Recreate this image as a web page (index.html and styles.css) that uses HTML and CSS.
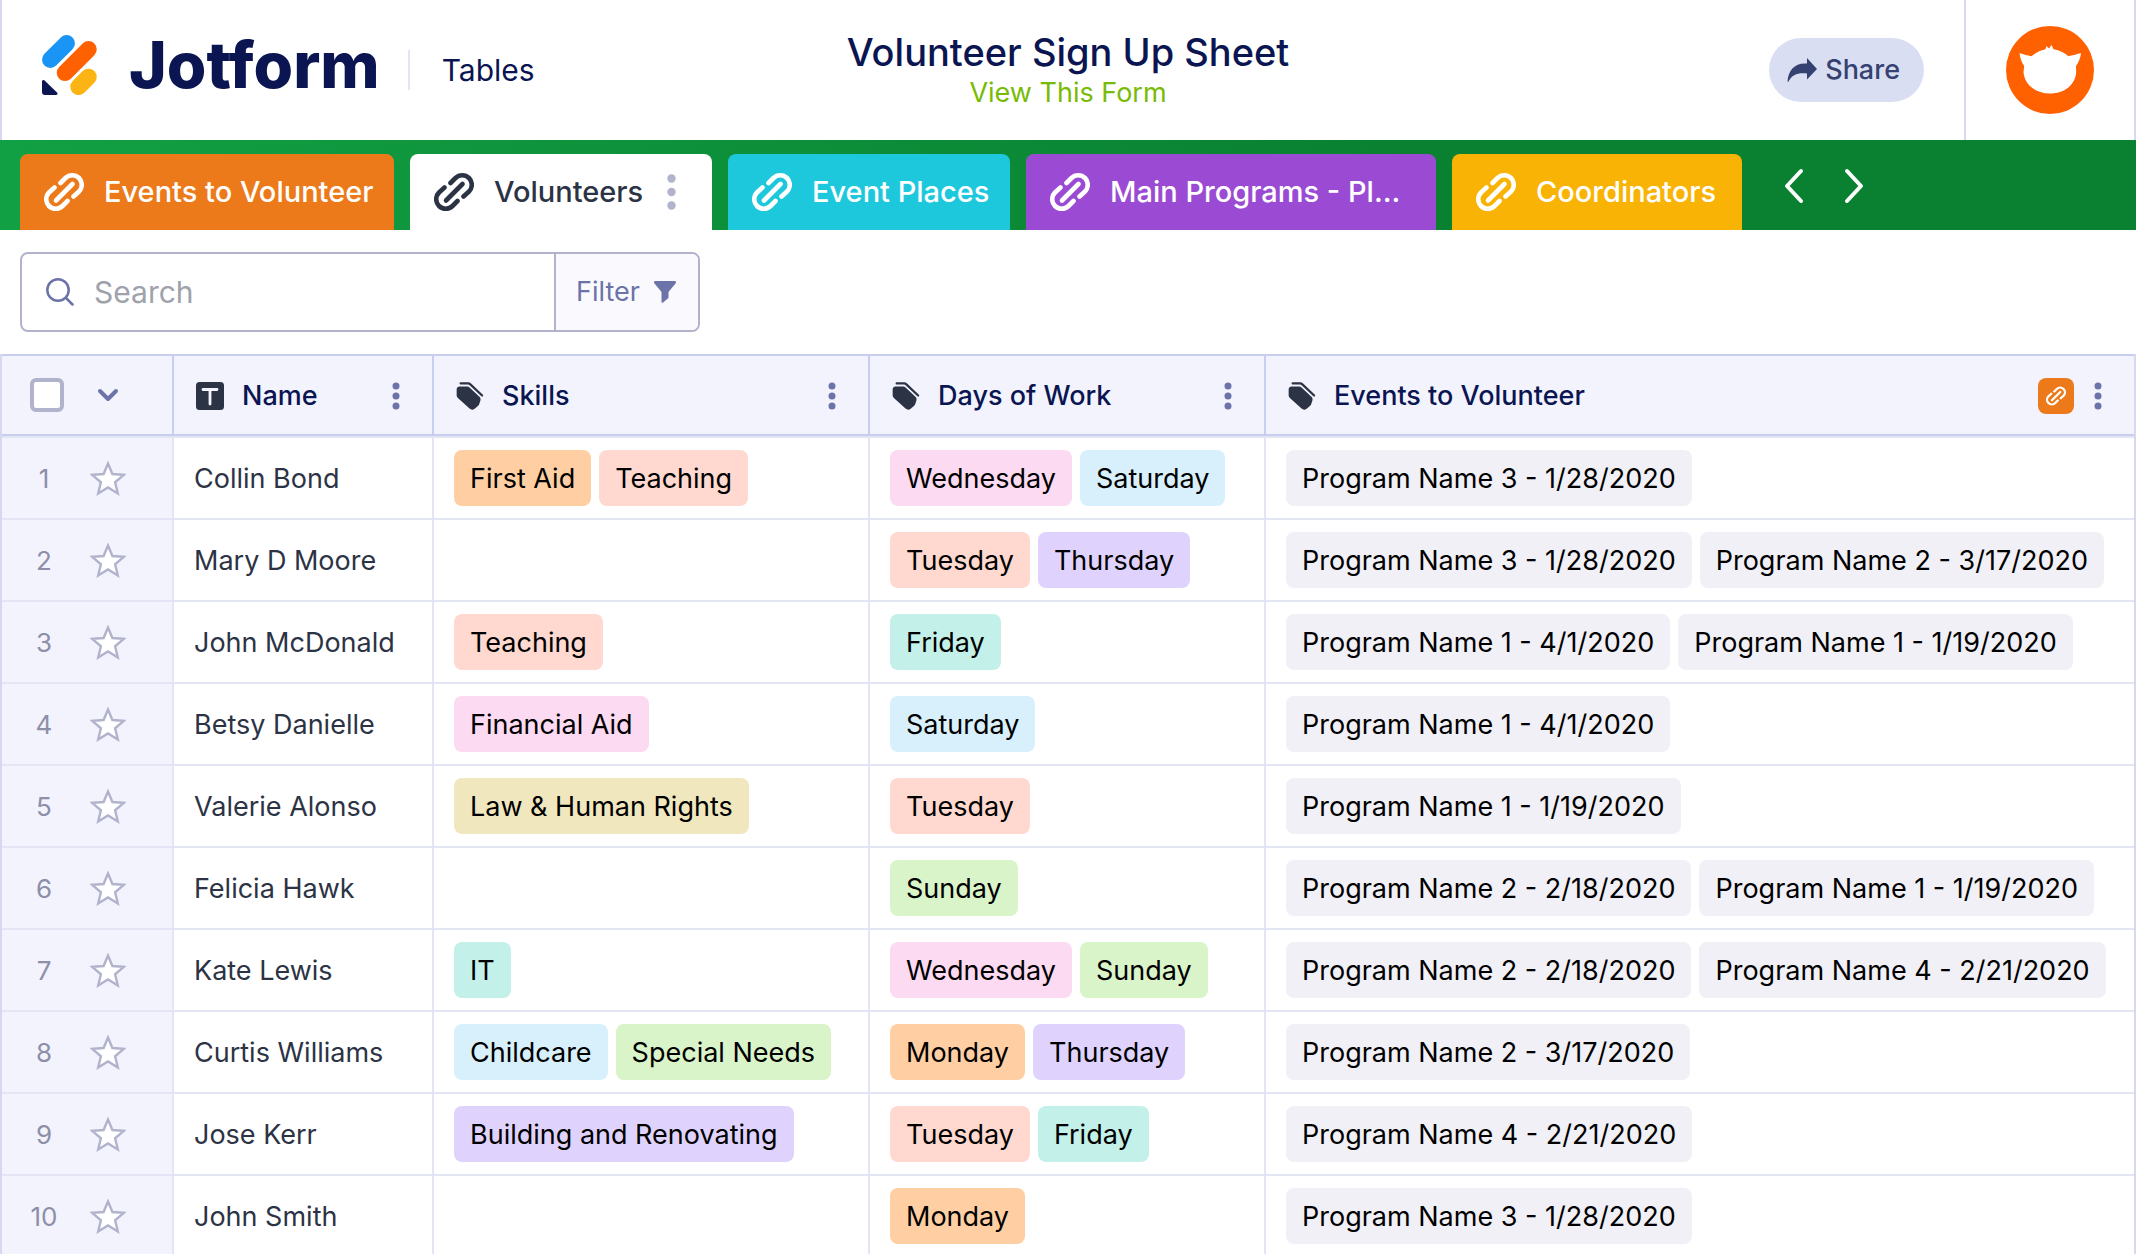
FILE: index.html
```html
<!DOCTYPE html>
<html lang="en">
<head>
<meta charset="utf-8">
<meta name="viewport" content="width=device-width, initial-scale=1">
<title>Volunteer Sign Up Sheet</title>
<link rel="stylesheet" href="styles.css">
</head>
<body>
<svg class="sprite" aria-hidden="true">
  <symbol id="i-link" viewBox="0 0 40 40"><g fill="none" stroke="currentColor" stroke-width="4.6" stroke-linecap="round" stroke-linejoin="round"><path d="M16.500 11L21.500 6A9.500 9.500 0 0 1 35 19.500L29.500 24.500"/><path d="M23.500 29L18.500 34A9.500 9.500 0 0 1 5 20.500L10.500 15.500"/><path d="M12 28.500L28.500 12"/></g></symbol>
  <symbol id="i-dots" viewBox="0 0 8 28"><circle cx="4" cy="4" r="3.500" fill="currentColor"/><circle cx="4" cy="14" r="3.500" fill="currentColor"/><circle cx="4" cy="24" r="3.500" fill="currentColor"/></symbol>
  <symbol id="i-tag" viewBox="0 0 29 30"><path d="M0.200 8C0.200 6 1.500 4.700 3.500 4.700H11C12.300 4.700 13.200 5 14 5.800L24.600 15.800C25.800 17 26.100 18.300 25.600 20L24.500 23.200C24.200 24.300 23.800 25 23 25.700L19.500 28.700C17.800 30 15.500 29.900 14 28.500L1.800 17.500C0.700 16.500 0.200 15.500 0.200 14Z" fill="currentColor"/><path d="M4.500 1.500H12.500C13.500 1.500 14.200 1.800 14.900 2.500L27.500 14.500" fill="none" stroke="currentColor" stroke-width="2.400" stroke-linecap="round"/></symbol>
  <symbol id="i-star" viewBox="0 0 36 36"><path d="M18 2.500L22.400 13L33.800 13.900L25.100 21.300L27.800 32.500L18 26.500L8.200 32.500L10.900 21.300L2.200 13.900L13.600 13Z" fill="#fff" stroke="currentColor" stroke-width="2.400"/></symbol>
</svg>

<header class="topbar">
  <div class="brand">
    <a class="brand-link" href="#">
      <svg class="brand-mark" viewBox="42 34 55 60" aria-hidden="true"><g fill="none" stroke-width="16.500" stroke-linecap="round"><path d="M50.300 58.700L66.700 42.300" stroke="#1a94f5"/><path d="M65 71.800L88.500 48.300" stroke="#ff6100"/><path d="M78.500 85.800L88.500 75.900" stroke="#fbb413"/></g><path d="M42 80.500C42 79 43.500 78.500 44.600 79.500L57 91.500C58 92.600 57.500 94 56 94H45C43 94 42 93 42 91Z" fill="#0a1551"/></svg>
      <span class="wordmark">Jotform</span>
    </a>
    <a class="product" href="#">Tables</a>
  </div>
  <div class="heading">
    <h1>Volunteer Sign Up Sheet</h1>
    <a class="view-form" href="#">View This Form</a>
  </div>
  <div class="account">
    <button class="share" type="button">
      <svg class="share-icon" viewBox="0 0 30 24" aria-hidden="true"><path d="M0.500 24C1 12 8 4.500 20 5.500V0L30 11L20 21.500V15.500C11 14.500 5 16.500 1.500 23.500Z" fill="#354170"/></svg>
      Share
    </button>
    <div class="profile">
      <button class="avatar" type="button" aria-label="Account">
        <svg viewBox="0 0 88 88" aria-hidden="true"><circle cx="44" cy="44" r="44" fill="#ff6100"/><path d="M13.500 27C18 28.500 21 29.500 25.500 30.200C30 26.500 34.500 24.200 39.500 23.200L40.500 20L43 22.500L45.500 19L47.500 23.200C54 24.200 59 27 62.500 30.200C66 29.500 70 28.500 75 27C74.500 32 72.500 36.500 70 40L70.200 46C69.500 59 58 67.500 44 67.500C30 67.500 18.500 59 17.500 46L18.200 40C15.500 36 14 32 13.500 27Z" fill="#fff"/></svg>
      </button>
    </div>
  </div>
</header>

<nav class="tabs">
  <button class="tab tab-orange" type="button"><svg class="link-icon" aria-hidden="true"><use href="#i-link"/></svg><span>Events to Volunteer</span></button>
  <button class="tab tab-active" type="button"><svg class="link-icon" aria-hidden="true"><use href="#i-link"/></svg><span>Volunteers</span><svg class="tab-dots" viewBox="0 0 9 36" aria-hidden="true"><circle cx="4.500" cy="4.500" r="4.200"/><circle cx="4.500" cy="18" r="4.200"/><circle cx="4.500" cy="31.500" r="4.200"/></svg></button>
  <button class="tab tab-cyan" type="button"><svg class="link-icon" aria-hidden="true"><use href="#i-link"/></svg><span>Event Places</span></button>
  <button class="tab tab-purple" type="button"><svg class="link-icon" aria-hidden="true"><use href="#i-link"/></svg><span>Main Programs - Pl...</span></button>
  <button class="tab tab-yellow" type="button"><svg class="link-icon" aria-hidden="true"><use href="#i-link"/></svg><span>Coordinators</span></button>
  <div class="pager">
    <button type="button" aria-label="Previous tabs"><svg viewBox="0 0 20 36" aria-hidden="true"><path d="M17 3L3 18L17 33"/></svg></button>
    <button type="button" aria-label="Next tabs"><svg viewBox="0 0 20 36" aria-hidden="true"><path d="M3 3L17 18L3 33"/></svg></button>
  </div>
</nav>

<form class="toolbar">
  <label class="search">
    <svg viewBox="0 0 28 28" aria-hidden="true"><circle cx="12" cy="12" r="10.700"/><path d="M20 20L26.500 26.500"/></svg>
    <input type="text" placeholder="Search" aria-label="Search">
  </label>
  <button class="filter" type="button">Filter
    <svg viewBox="0 0 22 22" aria-hidden="true"><path d="M1.500 0H20.500C22 0 22.500 1.500 21.500 2.600L14.500 11V17L9 21.500C8.300 22 7.500 21.700 7.500 20.800V11L0.500 2.600C-0.500 1.500 0 0 1.500 0Z" fill="currentColor"/></svg>
  </button>
</form>

<main class="sheet">
<table>
  <colgroup><col class="c-index"><col class="c-name"><col class="c-skills"><col class="c-days"><col></colgroup>
  <thead>
    <tr>
      <th><div class="index-head"><input type="checkbox" aria-label="Select all rows"><svg viewBox="0 0 22 14" aria-hidden="true"><path d="M3 3L11 11L19 3"/></svg></div></th>
      <th><div class="head"><svg class="type" viewBox="0 0 28 28" aria-hidden="true"><rect width="28" height="28" rx="3.500" fill="currentColor"/><path d="M7 7.500H21M14 7.500V22" stroke="#f3f3fe" stroke-width="2.800" stroke-linecap="round"/></svg><span>Name</span><svg class="dots" aria-hidden="true"><use href="#i-dots"/></svg></div></th>
      <th><div class="head"><svg class="type" aria-hidden="true"><use href="#i-tag"/></svg><span>Skills</span><svg class="dots" aria-hidden="true"><use href="#i-dots"/></svg></div></th>
      <th><div class="head"><svg class="type" aria-hidden="true"><use href="#i-tag"/></svg><span>Days of Work</span><svg class="dots" aria-hidden="true"><use href="#i-dots"/></svg></div></th>
      <th><div class="head"><svg class="type" aria-hidden="true"><use href="#i-tag"/></svg><span>Events to Volunteer</span><i class="linked"><svg aria-hidden="true"><use href="#i-link"/></svg></i><svg class="dots" aria-hidden="true"><use href="#i-dots"/></svg></div></th>
    </tr>
  </thead>
  <tbody>
    <tr><td><div class="index"><span>1</span><svg aria-hidden="true"><use href="#i-star"/></svg></div></td><td>Collin Bond</td><td><div class="chips"><span class="chip orange">First Aid</span><span class="chip coral">Teaching</span></div></td><td><div class="chips"><span class="chip pink">Wednesday</span><span class="chip sky">Saturday</span></div></td><td><div class="chips"><span class="chip">Program Name 3 - 1/28/2020</span></div></td></tr>
    <tr><td><div class="index"><span>2</span><svg aria-hidden="true"><use href="#i-star"/></svg></div></td><td>Mary D Moore</td><td></td><td><div class="chips"><span class="chip coral">Tuesday</span><span class="chip violet">Thursday</span></div></td><td><div class="chips"><span class="chip">Program Name 3 - 1/28/2020</span><span class="chip">Program Name 2 - 3/17/2020</span></div></td></tr>
    <tr><td><div class="index"><span>3</span><svg aria-hidden="true"><use href="#i-star"/></svg></div></td><td>John McDonald</td><td><div class="chips"><span class="chip coral">Teaching</span></div></td><td><div class="chips"><span class="chip teal">Friday</span></div></td><td><div class="chips"><span class="chip">Program Name 1 - 4/1/2020</span><span class="chip">Program Name 1 - 1/19/2020</span></div></td></tr>
    <tr><td><div class="index"><span>4</span><svg aria-hidden="true"><use href="#i-star"/></svg></div></td><td>Betsy Danielle</td><td><div class="chips"><span class="chip pink">Financial Aid</span></div></td><td><div class="chips"><span class="chip sky">Saturday</span></div></td><td><div class="chips"><span class="chip">Program Name 1 - 4/1/2020</span></div></td></tr>
    <tr><td><div class="index"><span>5</span><svg aria-hidden="true"><use href="#i-star"/></svg></div></td><td>Valerie Alonso</td><td><div class="chips"><span class="chip sand">Law &amp; Human Rights</span></div></td><td><div class="chips"><span class="chip coral">Tuesday</span></div></td><td><div class="chips"><span class="chip">Program Name 1 - 1/19/2020</span></div></td></tr>
    <tr><td><div class="index"><span>6</span><svg aria-hidden="true"><use href="#i-star"/></svg></div></td><td>Felicia Hawk</td><td></td><td><div class="chips"><span class="chip green">Sunday</span></div></td><td><div class="chips"><span class="chip">Program Name 2 - 2/18/2020</span><span class="chip">Program Name 1 - 1/19/2020</span></div></td></tr>
    <tr><td><div class="index"><span>7</span><svg aria-hidden="true"><use href="#i-star"/></svg></div></td><td>Kate Lewis</td><td><div class="chips"><span class="chip teal">IT</span></div></td><td><div class="chips"><span class="chip pink">Wednesday</span><span class="chip green">Sunday</span></div></td><td><div class="chips"><span class="chip">Program Name 2 - 2/18/2020</span><span class="chip">Program Name 4 - 2/21/2020</span></div></td></tr>
    <tr><td><div class="index"><span>8</span><svg aria-hidden="true"><use href="#i-star"/></svg></div></td><td>Curtis Williams</td><td><div class="chips"><span class="chip sky">Childcare</span><span class="chip green">Special Needs</span></div></td><td><div class="chips"><span class="chip orange">Monday</span><span class="chip violet">Thursday</span></div></td><td><div class="chips"><span class="chip">Program Name 2 - 3/17/2020</span></div></td></tr>
    <tr><td><div class="index"><span>9</span><svg aria-hidden="true"><use href="#i-star"/></svg></div></td><td>Jose Kerr</td><td><div class="chips"><span class="chip violet">Building and Renovating</span></div></td><td><div class="chips"><span class="chip coral">Tuesday</span><span class="chip teal">Friday</span></div></td><td><div class="chips"><span class="chip">Program Name 4 - 2/21/2020</span></div></td></tr>
    <tr><td><div class="index"><span>10</span><svg aria-hidden="true"><use href="#i-star"/></svg></div></td><td>John Smith</td><td></td><td><div class="chips"><span class="chip orange">Monday</span></div></td><td><div class="chips"><span class="chip">Program Name 3 - 1/28/2020</span></div></td></tr>
  </tbody>
</table>
</main>
</body>
</html>
```
FILE: styles.css
```css
* { box-sizing: border-box; }
body {
  margin: 0;
  height: 100vh;
  display: flex;
  flex-direction: column;
  overflow: hidden;
  background: #fff;
  color: #2c3345;
  font: 400 27px/36px Inter, "Liberation Sans", sans-serif;
}
button, input { font: inherit; color: inherit; margin: 0; }
button { border: 0; padding: 0; background: none; cursor: pointer; }
a { text-decoration: none; }
svg { display: block; flex: none; }
.sprite { position: absolute; width: 0; height: 0; }

/* Top bar */
.topbar {
  display: grid;
  grid-template-columns: 1fr auto 1fr;
  flex: none;
  height: 140px;
  border: solid #d6d8ef;
  border-width: 0 2px;
}
.brand { display: flex; align-items: center; padding-left: 40px; }
.brand-link { display: flex; align-items: center; gap: 32px; padding: 0 28px 10px 0; }
.brand-mark { width: 55px; height: 60px; }
.wordmark { color: #0a1551; font-weight: 800; font-size: 64px; line-height: 64px; }
.product {
  height: 40px;
  padding-left: 32px;
  border-left: 2px solid #e3e5f5;
  color: #0a1551;
  font-size: 30px;
  line-height: 40px;
}
.heading { display: flex; flex-direction: column; align-items: center; padding-top: 30px; }
h1 { margin: 0; color: #0a1551; font-weight: 500; font-size: 38px; line-height: 44px; }
.view-form { color: #78bb07; line-height: 38px; }
.account { display: flex; align-items: center; justify-content: flex-end; }
.share {
  display: flex;
  align-items: center;
  gap: 8px;
  height: 64px;
  padding: 0 24px 0 18px;
  margin-right: 40px;
  border-radius: 32px;
  background: #dadef3;
  color: #354170;
  font-weight: 500;
}
.share-icon { width: 30px; height: 24px; }
.profile { display: flex; align-items: center; height: 100%; padding: 0 40px; border-left: 2px solid #d6d8ef; }
.avatar, .avatar svg { width: 88px; height: 88px; }

/* Sheet tabs */
.tabs {
  display: flex;
  align-items: flex-end;
  gap: 16px;
  flex: none;
  height: 90px;
  padding-left: 20px;
  background: linear-gradient(90deg, #12a044, #098131 65%);
}
.tab {
  display: flex;
  align-items: center;
  gap: 20px;
  height: 76px;
  padding: 0 16px 0 24px;
  border-radius: 8px 8px 0 0;
  color: #fff;
  font-weight: 500;
  font-size: 29px;
  white-space: nowrap;
}
.link-icon { width: 40px; height: 40px; }
.tab-orange { width: 374px; background: #ed7a1a; }
.tab-active { width: 302px; background: #fff; color: #2c3345; }
.tab-cyan { width: 282px; background: #1ec8dc; }
.tab-purple { width: 410px; background: #9b4bd3; }
.tab-yellow { width: 290px; background: #f9b304; }
.tab-dots { width: 9px; height: 36px; margin: 0 20px 0 auto; fill: #b1b3cc; }
.pager { display: flex; align-items: center; gap: 40px; height: 90px; padding: 2px 0 0 26px; }
.pager svg { width: 20px; height: 36px; fill: none; stroke: #fff; stroke-width: 4; stroke-linecap: round; stroke-linejoin: round; }

/* Search and filter */
.toolbar { display: flex; flex: none; width: 680px; height: 80px; margin: 22px 20px; border: 2px solid #b1b3cc; border-radius: 8px; overflow: hidden; }
.search { display: flex; flex: 1; min-width: 0; align-items: center; gap: 20px; padding-left: 24px; }
.search svg { width: 28px; height: 28px; fill: none; stroke: #6c73a8; stroke-width: 2.5; stroke-linecap: round; }
.search input { flex: 1; min-width: 0; border: 0; padding: 0; outline: 0; font-size: 30px; line-height: 40px; }
.search input::placeholder { color: #9da2ab; opacity: 1; }
.filter { display: flex; flex: none; align-items: center; justify-content: space-between; width: 144px; padding: 0 22px 0 20px; border-left: 2px solid #b1b3cc; background: #fafafe; color: #6c73a8; }
.filter svg { width: 22px; height: 22px; }

/* Data table */
.sheet { flex: 1; min-height: 0; overflow: hidden; border: solid #d6d8ef; border-width: 0 2px; }
table { width: 100%; table-layout: fixed; border-collapse: separate; border-spacing: 0; }
.c-index { width: 172px; }
.c-name { width: 260px; }
.c-skills { width: 436px; }
.c-days { width: 396px; }
th, td { padding: 0 0 0 20px; text-align: left; white-space: nowrap; border-right: 2px solid #e3e5f5; border-bottom: 2px solid #e3e5f5; }
th { height: 82px; background: #f3f3fe; color: #0a1551; font-weight: 500; border-color: #c8ceed; border-top: 2px solid #c8ceed; }
td { height: 82px; }
tbody tr:first-child td { height: 84px; border-top: 2px solid #e3e5f5; }
th:first-child, td:first-child { padding: 0; background: #f3f3fe; }
td:nth-child(2) { padding-top: 2px; }
th:last-child, td:last-child { border-right: 0; }
.head { display: flex; align-items: center; padding: 2px 32px 0 2px; }
.head > span { flex: 1; padding-left: 18px; }
.type { width: 28px; height: 28px; color: #2c3345; }
.dots { width: 8px; height: 28px; color: #6c73a8; }
.linked { display: grid; place-items: center; width: 36px; height: 36px; margin-right: 20px; border-radius: 8px; background: #ed7a1a; color: #fff; }
.linked svg { width: 20px; height: 20px; }
.index-head { display: flex; align-items: center; gap: 33px; padding-left: 28px; }
.index-head input { appearance: none; width: 34px; height: 34px; border: 4px solid #b1b3cc; border-radius: 6px; background: #fff; }
.index-head svg { width: 22px; height: 14px; fill: none; stroke: #6c73a8; stroke-width: 4; stroke-linecap: round; stroke-linejoin: round; }
.index { display: flex; align-items: center; padding-top: 2px; color: #8d8fa8; }
.index span { width: 84px; text-align: center; font-size: 26px; }
.index svg { width: 36px; height: 36px; margin-left: 4px; color: #b1b3cc; }
.chips { display: flex; gap: 8px; }
.chip { padding: 11px 16px 9px; border-radius: 8px; background: #f0f0f6; color: #000; }
.orange { background: #ffcfa3; }
.coral { background: #ffd9d0; }
.pink { background: #fcdaf2; }
.sky { background: #d8effc; }
.violet { background: #dfd3fe; }
.teal { background: #c3f0e8; }
.green { background: #d9f4c8; }
.sand { background: #f0e7be; }
```
